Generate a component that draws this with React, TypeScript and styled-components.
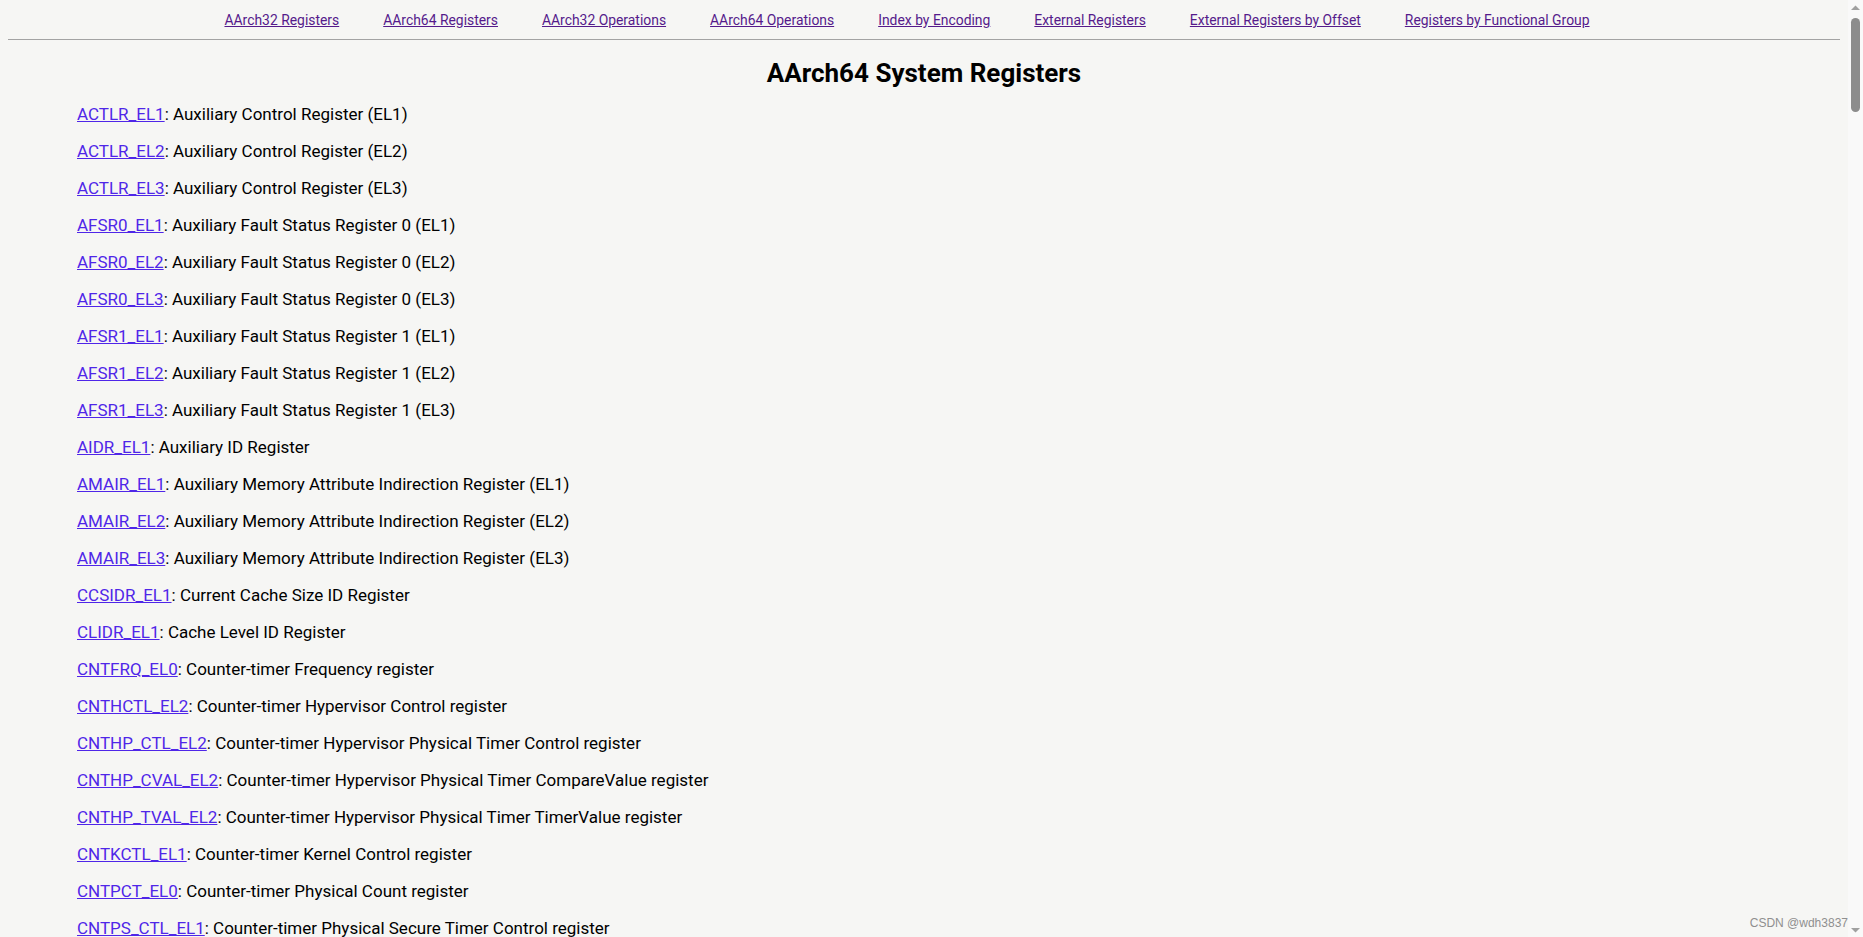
import React from "react";
import styled, { createGlobalStyle } from "styled-components";

const GlobalStyle = createGlobalStyle`
  html, body {
    margin: 0;
    padding: 0;
    height: 100%;
    overflow: hidden;
    background: #f6f6f4;
  }
`;

const NAV_ITEMS = [
  "AArch32 Registers",
  "AArch64 Registers",
  "AArch32 Operations",
  "AArch64 Operations",
  "Index by Encoding",
  "External Registers",
  "External Registers by Offset",
  "Registers by Functional Group",
];

const REGISTERS: [string, string][] = [
  ["ACTLR_EL1", "Auxiliary Control Register (EL1)"],
  ["ACTLR_EL2", "Auxiliary Control Register (EL2)"],
  ["ACTLR_EL3", "Auxiliary Control Register (EL3)"],
  ["AFSR0_EL1", "Auxiliary Fault Status Register 0 (EL1)"],
  ["AFSR0_EL2", "Auxiliary Fault Status Register 0 (EL2)"],
  ["AFSR0_EL3", "Auxiliary Fault Status Register 0 (EL3)"],
  ["AFSR1_EL1", "Auxiliary Fault Status Register 1 (EL1)"],
  ["AFSR1_EL2", "Auxiliary Fault Status Register 1 (EL2)"],
  ["AFSR1_EL3", "Auxiliary Fault Status Register 1 (EL3)"],
  ["AIDR_EL1", "Auxiliary ID Register"],
  ["AMAIR_EL1", "Auxiliary Memory Attribute Indirection Register (EL1)"],
  ["AMAIR_EL2", "Auxiliary Memory Attribute Indirection Register (EL2)"],
  ["AMAIR_EL3", "Auxiliary Memory Attribute Indirection Register (EL3)"],
  ["CCSIDR_EL1", "Current Cache Size ID Register"],
  ["CLIDR_EL1", "Cache Level ID Register"],
  ["CNTFRQ_EL0", "Counter-timer Frequency register"],
  ["CNTHCTL_EL2", "Counter-timer Hypervisor Control register"],
  ["CNTHP_CTL_EL2", "Counter-timer Hypervisor Physical Timer Control register"],
  ["CNTHP_CVAL_EL2", "Counter-timer Hypervisor Physical Timer CompareValue register"],
  ["CNTHP_TVAL_EL2", "Counter-timer Hypervisor Physical Timer TimerValue register"],
  ["CNTKCTL_EL1", "Counter-timer Kernel Control register"],
  ["CNTPCT_EL0", "Counter-timer Physical Count register"],
  ["CNTPS_CTL_EL1", "Counter-timer Physical Secure Timer Control register"],
];

const Screen = styled.div`
  display: flex;
  height: 100vh;
  overflow: hidden;
  background: #f6f6f4;
`;

const Content = styled.div`
  position: relative;
  flex: 1;
  min-width: 0;
  padding: 0 8px;
  overflow: hidden;
  font-family: Roboto, "Liberation Sans", sans-serif;
  color: #000;
`;

const Nav = styled.nav`
  display: flex;
  justify-content: center;
  gap: 44px;
  padding: 11px 34px 0 0;
  height: 19px;
  line-height: 19px;
  font-size: 13.9px;
  white-space: nowrap;
`;

const NavLink = styled.a`
  color: #551a8b;
  text-decoration: underline;
`;

const Divider = styled.hr`
  margin: 9px 0 0;
  border: 0;
  height: 1px;
  background: #a3a3a3;
`;

const Title = styled.h1`
  margin: 17px 0 0;
  text-align: center;
  font-size: 26px;
  line-height: 32px;
  font-weight: 700;
`;

const List = styled.div`
  margin-top: 7px;
  padding-left: 69px;
`;

const Entry = styled.p`
  margin: 0;
  font-size: 17px;
  line-height: 37px;
  white-space: nowrap;
`;

const RegLink = styled.a`
  color: #4f26e8;
  text-decoration: underline;
`;

const Watermark = styled.span`
  position: absolute;
  right: 0;
  bottom: 7px;
  font-family: "Liberation Sans", Arial, sans-serif;
  font-size: 12px;
  color: #8f8f8f;
`;

const ScrollRail = styled.div`
  width: 15px;
  flex-shrink: 0;
  display: flex;
  flex-direction: column;
  align-items: center;
  background: #f9f9f9;
`;

const ArrowBox = styled.div`
  height: 15px;
  display: flex;
  align-items: center;
  justify-content: center;
`;

const Track = styled.div`
  flex: 1;
  width: 100%;
  display: flex;
  justify-content: center;
`;

const Thumb = styled.div`
  margin-top: 3px;
  width: 9px;
  height: 94px;
  border-radius: 5px;
  background: #8c8c8c;
`;

const Arrow: React.FC<{ down?: boolean }> = ({ down }) => (
  <ArrowBox>
    <svg width="9" height="6" viewBox="0 0 9 6">
      <path d={down ? "M0 1 L9 1 L4.5 5.5 Z" : "M0 5 L9 5 L4.5 0.5 Z"} fill="#a0a0a0" />
    </svg>
  </ArrowBox>
);

export default function App() {
  return (
    <Screen>
      <GlobalStyle />
      <Content>
        <Nav>
          {NAV_ITEMS.map((item) => (
            <NavLink key={item} href="#">
              {item}
            </NavLink>
          ))}
        </Nav>
        <Divider />
        <Title>AArch64 System Registers</Title>
        <List>
          {REGISTERS.map(([name, desc]) => (
            <Entry key={name}>
              <RegLink href="#">{name}</RegLink>: {desc}
            </Entry>
          ))}
        </List>
        <Watermark>CSDN @wdh3837</Watermark>
      </Content>
      <ScrollRail>
        <Arrow />
        <Track>
          <Thumb />
        </Track>
        <Arrow down />
      </ScrollRail>
    </Screen>
  );
}
